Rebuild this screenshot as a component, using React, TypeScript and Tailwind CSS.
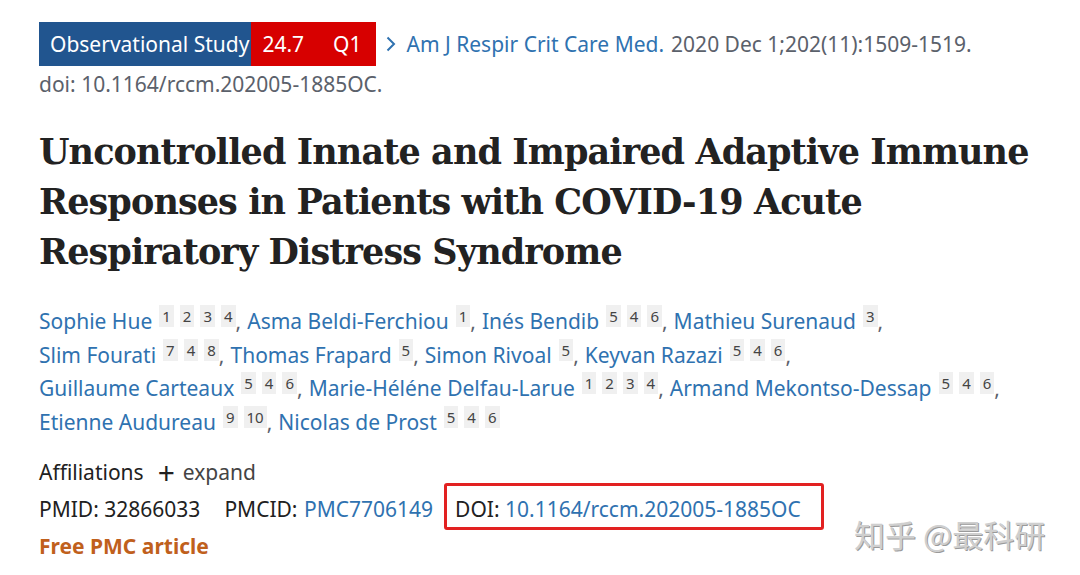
import React from "react";

type Author = { name: string; refs: string[] };

const authors: Author[][] = [
  [
    { name: "Sophie Hue", refs: ["1", "2", "3", "4"] },
    { name: "Asma Beldi-Ferchiou", refs: ["1"] },
    { name: "Inés Bendib", refs: ["5", "4", "6"] },
    { name: "Mathieu Surenaud", refs: ["3"] },
  ],
  [
    { name: "Slim Fourati", refs: ["7", "4", "8"] },
    { name: "Thomas Frapard", refs: ["5"] },
    { name: "Simon Rivoal", refs: ["5"] },
    { name: "Keyvan Razazi", refs: ["5", "4", "6"] },
  ],
  [
    { name: "Guillaume Carteaux", refs: ["5", "4", "6"] },
    { name: "Marie-Héléne Delfau-Larue", refs: ["1", "2", "3", "4"] },
    { name: "Armand Mekontso-Dessap", refs: ["5", "4", "6"] },
  ],
  [
    { name: "Etienne Audureau", refs: ["9", "10"] },
    { name: "Nicolas de Prost", refs: ["5", "4", "6"] },
  ],
];

const sans = "font-['Noto_Sans','Open_Sans',sans-serif]";

function Refs({ refs }: { refs: string[] }) {
  return (
    <span className="ml-[7px] inline-flex gap-[6px] align-[7px]">
      {refs.map((r, i) => (
        <span
          key={i}
          className="inline-block bg-[#f0f0f0] px-[3px] text-[15px] leading-[22px] text-[#444]"
        >
          {r}
        </span>
      ))}
    </span>
  );
}

export default function App() {
  return (
    <div className={`relative min-h-[575px] w-[1080px] bg-white pl-[39px] pt-[22px] text-[#212121] ${sans}`}>
      {/* citation row */}
      <div className="flex items-center text-[21px] leading-[44px]">
        <span className="bg-[#21558f] pl-[11px] pr-[2px] text-white">Observational Study</span>
        <span className="flex gap-[29px] bg-[#d70000] pl-[11px] pr-[14px] text-white">
          <span>24.7</span>
          <span>Q1</span>
        </span>
        <span className="ml-[9px] text-[#2f72b0]">
          <svg width="12" height="18" viewBox="0 0 12 18" className="mr-[10px] inline-block align-[-1px]">
            <path d="M2.5 2.5l6.5 6.5-6.5 6.5" fill="none" stroke="currentColor" strokeWidth="2" />
          </svg>
          Am J Respir Crit Care Med.
        </span>
        <span className="ml-[7px] text-[#5b616b]">2020 Dec 1;202(11):1509-1519.</span>
      </div>
      <div className="text-[21px] leading-[36px] text-[#5b616b]">doi: 10.1164/rccm.202005-1885OC.</div>

      {/* title */}
      <h1 className="mt-[25px] font-['DejaVu_Serif',serif] text-[35px] font-bold leading-[50px] tracking-[-0.9px] text-[#222]">
        Uncontrolled Innate and Impaired Adaptive Immune
        <br />
        Responses in Patients with COVID-19 Acute
        <br />
        Respiratory Distress Syndrome
      </h1>

      {/* authors */}
      <div className="mt-[28px] text-[21px] leading-[33.5px] text-[#2f72b0]">
        {authors.map((line, li) => (
          <div key={li}>
            {line.map((a, ai) => {
              const last = li === authors.length - 1 && ai === line.length - 1;
              return (
                <span key={ai}>
                  <span>{a.name}</span>
                  <Refs refs={a.refs} />
                  {!last && <span className="mr-[6px] text-[#5b616b]">,</span>}
                </span>
              );
            })}
          </div>
        ))}
      </div>

      {/* meta */}
      <div className="mt-[15px] text-[21px] leading-[37px]">
        <div className="flex items-center">
          <span>Affiliations</span>
          <span className="ml-[14px] text-[30px] leading-none">+</span>
          <span className="ml-[8px] text-[#444]">expand</span>
        </div>
        <div>
          <span>PMID: 32866033</span>
          <span className="ml-[24px]">PMCID: </span>
          <span className="ml-[1px] text-[#2f72b0]">PMC7706149</span>
          <span className="ml-[11px] rounded-[3px] border-[3px] border-[#e22121] pb-[4px] pl-[8px] pr-[20px] pt-[9px]">
            DOI: <span className="text-[#2f72b0]">10.1164/rccm.202005-1885OC</span>
          </span>
        </div>
        <div className="font-bold text-[#c0601c]">Free PMC article</div>
      </div>

      {/* watermark */}
      <span className="absolute left-[854px] top-[514px] font-['Noto_Sans_CJK_SC',sans-serif] text-[31px] leading-[40px] text-[#cfcfcf] [text-shadow:1px_1px_0_#9a9a9a]">
        知乎 @最科研
      </span>
    </div>
  );
}
